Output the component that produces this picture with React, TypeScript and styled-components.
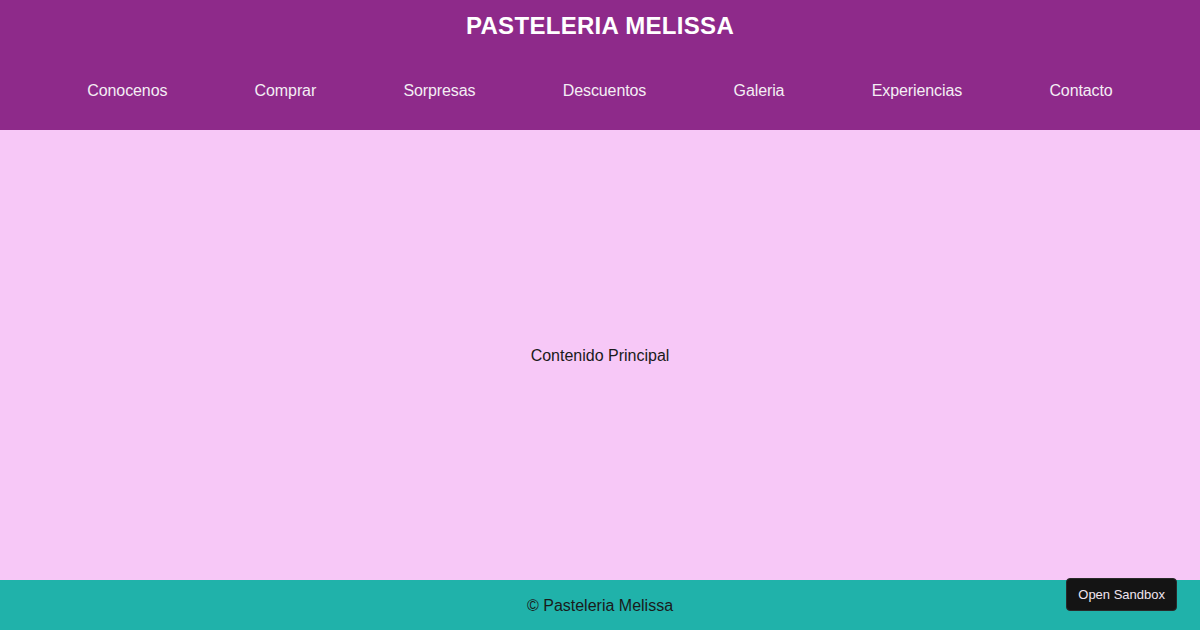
import React from "react";
import styled, { createGlobalStyle } from "styled-components";

const Global = createGlobalStyle`
  html, body { margin: 0; padding: 0; }
  body { font-family: "Liberation Sans", Arial, sans-serif; }
  * { box-sizing: border-box; }
`;

const Page = styled.div`
  min-height: 100vh;
  display: flex;
  flex-direction: column;
`;

const Header = styled.header`
  background: #8e2a8a;
  color: #ffffff;
  padding-top: 11px;
  height: 130px;
`;

const Title = styled.h1`
  margin: 0;
  font-size: 24px;
  line-height: 30px;
  font-weight: 700;
  letter-spacing: 0.3px;
  text-align: center;
`;

const Nav = styled.nav`
  display: flex;
  justify-content: space-evenly;
  padding: 40px 0 29px;
`;

const NavLink = styled.a`
  color: #f4eef4;
  font-size: 16px;
  line-height: 20px;
  letter-spacing: -0.1px;
  text-decoration: none;
  cursor: pointer;
`;

const Main = styled.main`
  flex: 1;
  background: #f7c8f7;
  display: flex;
  align-items: center;
  justify-content: center;
  padding-top: 2px;
  color: #1a1a1a;
  font-size: 16px;
`;

const Footer = styled.footer`
  height: 50px;
  background: #20b2aa;
  display: flex;
  align-items: center;
  justify-content: center;
  padding-top: 2px;
  color: #1a1a1a;
  font-size: 16px;
`;

const SandboxButton = styled.button`
  position: fixed;
  right: 23px;
  bottom: 19px;
  height: 33px;
  padding: 0 11px;
  background: #141414;
  color: #f0e4f0;
  border: 1px solid #2a2a2a;
  border-radius: 4px;
  font-family: "Liberation Sans", Arial, sans-serif;
  font-size: 13px;
  cursor: pointer;
`;

const links = ["Conocenos", "Comprar", "Sorpresas", "Descuentos", "Galeria", "Experiencias", "Contacto"];

export default function App() {
  return (
    <Page>
      <Global />
      <Header>
        <Title>PASTELERIA MELISSA</Title>
        <Nav>
          {links.map((l) => (
            <NavLink key={l}>{l}</NavLink>
          ))}
        </Nav>
      </Header>
      <Main>Contenido Principal</Main>
      <Footer>© Pasteleria Melissa</Footer>
      <SandboxButton>Open Sandbox</SandboxButton>
    </Page>
  );
}
